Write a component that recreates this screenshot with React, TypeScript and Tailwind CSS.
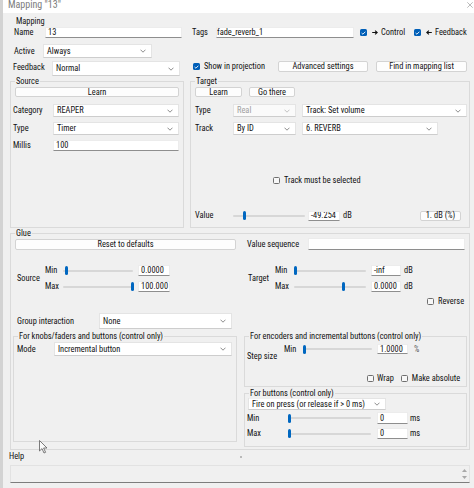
import React from "react";

const Chevron = ({ light }: { light?: boolean }) => (
  <svg width="6" height="4" viewBox="0 0 6 4" className="shrink-0">
    <path d="M0.5 0.7 L3 3.2 L5.5 0.7" fill="none" stroke={light ? "#b4b4b4" : "#707070"} strokeWidth="0.8" />
  </svg>
);

const ArrowRight = ({ className = "" }: { className?: string }) => (
  <svg className={`shrink-0 ${className}`} width="6" height="5" viewBox="0 0 6 5">
    <path d="M0.2 2.5 H4.8 M3.1 0.6 L5.2 2.5 L3.1 4.4" fill="none" stroke="#111" strokeWidth="1.1" />
  </svg>
);

const ArrowLeft = ({ className = "" }: { className?: string }) => (
  <svg className={`shrink-0 ${className}`} width="6" height="5" viewBox="0 0 6 5">
    <path d="M5.8 2.5 H1.2 M2.9 0.6 L0.8 2.5 L2.9 4.4" fill="none" stroke="#111" strokeWidth="1.1" />
  </svg>
);

function Select({ w, h, value, disabled }: { w: string; h: string; value: string; disabled?: boolean }) {
  return (
    <div
      className={`flex items-center justify-between shrink-0 whitespace-nowrap overflow-hidden border border-[#e4e4e4] border-b-[#cdcdcd] pl-[3px] pr-[5px] ${w} ${h} ${
        disabled ? "bg-[#fafafa] text-[#a0a0a0]" : "bg-white"
      }`}
    >
      <span>{value}</span>
      <Chevron light={disabled} />
    </div>
  );
}

function TextBox({ w, h, value, className = "" }: { w: string; h: string; value: string; className?: string }) {
  return (
    <div
      className={`flex items-center shrink-0 whitespace-nowrap overflow-hidden bg-white border border-[#ececec] border-b-[#8e8e8e] pl-[2px] ${w} ${h} ${className}`}
    >
      {value}
    </div>
  );
}

function Btn({ w, h, label, className = "" }: { w: string; h: string; label: string; className?: string }) {
  return (
    <button
      type="button"
      className={`flex items-center justify-center shrink-0 whitespace-nowrap bg-[#fdfdfd] border border-[#d3d3d3] rounded-[2px] leading-none ${w} ${h} ${className}`}
    >
      {label}
    </button>
  );
}

function Check({ checked, className = "" }: { checked?: boolean; className?: string }) {
  return checked ? (
    <span className={`flex items-center justify-center shrink-0 w-[7px] h-[7px] rounded-[1.5px] bg-[#005fb8] ${className}`}>
      <svg width="5" height="4" viewBox="0 0 5 4">
        <path d="M0.6 2 L1.9 3.2 L4.4 0.7" fill="none" stroke="white" strokeWidth="0.9" />
      </svg>
    </span>
  ) : (
    <span className={`shrink-0 w-[7px] h-[7px] rounded-[1.5px] border border-[#6f6f6f] bg-[#f7f7f7] ${className}`} />
  );
}

function Slider({ w, pos }: { w: string; pos: number }) {
  return (
    <div className={`relative flex items-center shrink-0 h-[9px] ${w}`}>
      <div className="h-[2px] w-full rounded-full bg-[#d7d7d7]" />
      <div className="absolute top-0 h-[9px] w-[3px] rounded-[1.5px] bg-[#0067c0]" style={{ left: pos }} />
    </div>
  );
}

function Group({ label, className = "", children }: { label: string; className?: string; children?: React.ReactNode }) {
  return (
    <div className={`relative shrink-0 border border-[#dadada] flex flex-col ${className}`}>
      <span className="absolute left-[4px] top-[-6px] px-[1px] bg-[#f0f0f0] leading-[11px] whitespace-nowrap">{label}</span>
      {children}
    </div>
  );
}

export default function App() {
  return (
    <div className="font-['Roboto',sans-serif] [font-stretch:75%] relative w-[474px] h-[488px] overflow-hidden bg-[#f0f0f0] text-[8.4px] leading-[11px] text-[#111] shadow-[inset_3px_0_0_#d3d3d3] flex flex-col">
      {/* Title bar */}
      <div className="h-[13px] shrink-0 ml-[3px] bg-white flex items-start overflow-hidden">
        <span className="ml-[5px] -mt-[1px] text-[10px] leading-[12px] text-[#7c7c7c] whitespace-nowrap">Mapping "13"</span>
        <svg className="ml-auto mt-[2px] mr-[1px]" width="6" height="6" viewBox="0 0 6 6">
          <path d="M0.3 0.3 L5.7 5.7 M5.7 0.3 L0.3 5.7" stroke="#9c9c9c" strokeWidth="0.7" />
        </svg>
      </div>

      {/* Mapping */}
      <div className="h-[10px] mt-[3px] flex items-center pl-[16px]">Mapping</div>
      <div className="h-[11px] mt-[1px] flex items-center pl-[14px] whitespace-nowrap">
        <span className="w-[31px] shrink-0">Name</span>
        <TextBox w="w-[137px]" h="h-[11px]" value="13" />
        <span className="ml-[10px] w-[24px] shrink-0">Tags</span>
        <TextBox w="w-[138px]" h="h-[11px]" value="fade_reverb_1" className="!pl-0" />
        <Check checked className="ml-[6px]" />
        <div className="w-[47px] shrink-0 flex items-center">
          <ArrowRight className="ml-[5px]" />
          <span className="ml-[3px]">Control</span>
        </div>
        <Check checked />
        <div className="flex items-center">
          <ArrowLeft className="ml-[5px]" />
          <span className="ml-[3px]">Feedback</span>
        </div>
      </div>
      <div className="h-[14px] mt-[6px] flex items-center pl-[14px]">
        <span className="w-[29px] shrink-0">Active</span>
        <Select w="w-[109px]" h="h-[14px]" value="Always" />
      </div>
      <div className="h-[15px] mt-[3px] flex items-start pl-[13px] whitespace-nowrap">
        <span className="w-[39px] h-[12px] shrink-0 flex items-center">Feedback</span>
        <Select w="w-[128px]" h="h-[15px]" value="Normal" />
        <div className="ml-[13px] w-[85px] h-[11px] shrink-0 flex items-center">
          <Check checked />
          <span className="ml-[4px]">Show in projection</span>
        </div>
        <Btn w="w-[90px]" h="h-[11px]" label="Advanced settings" />
        <Btn w="w-[91px]" h="h-[11px]" label="Find in mapping list" className="ml-[8px]" />
      </div>

      {/* Source / Target */}
      <div className="mt-[5px] flex items-start">
        <Group label="Source" className="ml-[10px] w-[174px] h-[147px]">
          <Btn w="w-[164px]" h="h-[10px]" label="Learn" className="ml-[4px] mt-[5px]" />
          <div className="mt-[7px] h-[13px] flex items-center pl-[2px]">
            <span className="w-[40px] shrink-0">Category</span>
            <Select w="w-[126px]" h="h-[13px]" value="REAPER" />
          </div>
          <div className="mt-[5px] h-[13px] flex items-center pl-[2px]">
            <span className="w-[40px] shrink-0">Type</span>
            <Select w="w-[126px]" h="h-[13px]" value="Timer" />
          </div>
          <div className="mt-[5px] h-[11px] flex items-center pl-[2px]">
            <span className="w-[40px] shrink-0">Millis</span>
            <TextBox w="w-[126px]" h="h-[11px]" value="100" />
          </div>
        </Group>

        <Group label="Target" className="ml-[6px] w-[280px] h-[147px]">
          <div className="mt-[5px] h-[10px] flex pl-[4px]">
            <Btn w="w-[47px]" h="h-[10px]" label="Learn" />
            <Btn w="w-[46px]" h="h-[10px]" label="Go there" className="ml-[7px]" />
          </div>
          <div className="mt-[7px] h-[13px] flex items-center pl-[4px]">
            <span className="w-[38px] shrink-0">Type</span>
            <Select w="w-[63px]" h="h-[13px]" value="Real" disabled />
            <div className="ml-[6px]">
              <Select w="w-[165px]" h="h-[13px]" value="Track: Set volume" />
            </div>
          </div>
          <div className="mt-[5px] h-[13px] flex items-center pl-[4px]">
            <span className="w-[38px] shrink-0">Track</span>
            <Select w="w-[63px]" h="h-[13px]" value="By ID" />
            <div className="ml-[6px]">
              <Select w="w-[136px]" h="h-[13px]" value="6. REVERB" />
            </div>
          </div>
          <div className="mt-[41px] h-[9px] flex items-center pl-[82px] whitespace-nowrap">
            <Check />
            <span className="ml-[4px]">Track must be selected</span>
          </div>
          <div className="mt-[24px] h-[13px] flex items-center pl-[4px] whitespace-nowrap">
            <span className="w-[38px] shrink-0">Value</span>
            <Slider w="w-[72px]" pos={10} />
            <TextBox w="w-[32px]" h="h-[10px]" value="-49.254" className="ml-[3px]" />
            <span className="ml-[3px]">dB</span>
            <Btn w="w-[41px]" h="h-[10px]" label="1. dB (%)" className="ml-auto mr-[8px]" />
          </div>
        </Group>
      </div>

      {/* Glue */}
      <Group label="Glue" className="mt-[5px] ml-[10px] w-[460px] h-[217px]">
        <div className="mt-[4px] h-[12px] flex items-center whitespace-nowrap">
          <Btn w="w-[221px]" h="h-[11px]" label="Reset to defaults" className="ml-[4px]" />
          <span className="ml-[11px] w-[61px] shrink-0">Value sequence</span>
          <TextBox w="w-[157px]" h="h-[12px]" value="" />
        </div>

        <div className="mt-[15px] h-[27px] flex items-center whitespace-nowrap">
          <span className="ml-[6px] w-[28px] shrink-0">Source</span>
          <div className="w-[125px] shrink-0 flex flex-col">
            <div className="h-[11px] flex items-center">
              <span className="w-[18px] shrink-0">Min</span>
              <Slider w="w-[70px]" pos={2} />
              <TextBox w="w-[32px]" h="h-[11px]" value="0.0000" className="ml-[5px]" />
            </div>
            <div className="mt-[5px] h-[11px] flex items-center">
              <span className="w-[18px] shrink-0">Max</span>
              <Slider w="w-[70px]" pos={67.5} />
              <TextBox w="w-[32px]" h="h-[11px]" value="100.000" className="ml-[5px]" />
            </div>
          </div>
          <span className="ml-[78px] w-[27px] shrink-0">Target</span>
          <div className="flex flex-col">
            <div className="h-[11px] flex items-center">
              <span className="w-[19px] shrink-0">Min</span>
              <Slider w="w-[72px]" pos={0} />
              <TextBox w="w-[30px]" h="h-[11px]" value="-inf" className="ml-[5px]" />
              <span className="ml-[3px]">dB</span>
            </div>
            <div className="mt-[5px] h-[11px] flex items-center">
              <span className="w-[19px] shrink-0">Max</span>
              <Slider w="w-[72px]" pos={48} />
              <TextBox w="w-[30px]" h="h-[11px]" value="0.0000" className="ml-[5px]" />
              <span className="ml-[3px]">dB</span>
            </div>
          </div>
        </div>

        <div className="mt-[5px] h-[9px] flex items-center pl-[416px] whitespace-nowrap">
          <Check />
          <span className="ml-[4px]">Reverse</span>
        </div>

        <div className="mt-[7px] h-[16px] flex items-center pl-[6px] whitespace-nowrap">
          <span className="w-[82px] shrink-0">Group interaction</span>
          <Select w="w-[133px]" h="h-[16px]" value="None" />
        </div>

        <div className="mt-[7px] flex items-start">
          <Group label="For knobs/faders and buttons (control only)" className="ml-[2px] w-[224px] h-[106px]">
            <div className="mt-[5px] h-[14px] flex items-center pl-[3px]">
              <span className="w-[37px] shrink-0">Mode</span>
              <Select w="w-[178px]" h="h-[14px]" value="Incremental button" />
            </div>
          </Group>

          <div className="ml-[7px] w-[223px] flex flex-col">
            <Group label="For encoders and incremental buttons (control only)" className="h-[51px]">
              <div className="mt-[7px] h-[17px] flex items-start whitespace-nowrap">
                <span className="w-[39px] pl-[2px] shrink-0 self-end leading-[9px]">Step size</span>
                <div className="h-[10px] flex items-center">
                  <span className="w-[19px] shrink-0">Min</span>
                  <Slider w="w-[69px]" pos={0} />
                  <TextBox w="w-[31px]" h="h-[10px]" value="1.0000" className="ml-[5px]" />
                  <span className="ml-[6px] text-[#555]">%</span>
                </div>
              </div>
              <div className="mt-[13px] h-[9px] flex items-center pl-[122px] whitespace-nowrap">
                <Check />
                <span className="ml-[3px]">Wrap</span>
                <Check className="ml-[7px]" />
                <span className="ml-[4px]">Make absolute</span>
              </div>
            </Group>

            <Group label="For buttons (control only)" className="mt-[6px] h-[54px]">
              <div className="mt-[4px] ml-[3px]">
                <Select w="w-[138px]" h="h-[12px]" value="Fire on press (or release if > 0 ms)" />
              </div>
              <div className="mt-[2px] h-[12px] flex items-center pl-[2px] whitespace-nowrap">
                <span className="w-[41px] shrink-0">Min</span>
                <Slider w="w-[83px]" pos={0} />
                <TextBox w="w-[31px]" h="h-[12px]" value="0" className="ml-[6px]" />
                <span className="ml-[2px]">ms</span>
              </div>
              <div className="mt-[4px] h-[11px] flex items-center pl-[2px] whitespace-nowrap">
                <span className="w-[41px] shrink-0">Max</span>
                <Slider w="w-[83px]" pos={0} />
                <TextBox w="w-[31px]" h="h-[11px]" value="0" className="ml-[6px]" />
                <span className="ml-[2px]">ms</span>
              </div>
            </Group>
          </div>
        </div>
      </Group>

      {/* Help */}
      <div className="mt-[1px] h-[11px] flex items-center pl-[9px]">
        <span className="w-[231px] shrink-0">Help</span>
        <span className="w-[2px] h-[2px] rounded-full bg-[#a8a8a8]" />
      </div>
      <div className="mt-[3px] ml-[10px] w-[460px] h-[18px] shrink-0 border border-[#e2e2e2] border-b-[#7d7d7d] flex justify-end">
        <div className="mr-[2px] flex flex-col justify-between py-[3px]">
          <svg width="5" height="3" viewBox="0 0 5 3"><path d="M0 3 L2.5 0 L5 3 Z" fill="#a8a8a8" /></svg>
          <svg width="5" height="3" viewBox="0 0 5 3"><path d="M0 0 L2.5 3 L5 0 Z" fill="#a8a8a8" /></svg>
        </div>
      </div>

      {/* Mouse cursor */}
      <svg className="absolute left-[39px] top-[440px]" width="10" height="14" viewBox="0 0 10 14">
        <path d="M0.5 0.5 V11 L3 8.6 L5 13 L6.6 12.3 L4.6 8 H8 Z" fill="#fafafa" stroke="#5a5a5a" strokeWidth="0.8" strokeLinejoin="round" />
      </svg>
    </div>
  );
}
